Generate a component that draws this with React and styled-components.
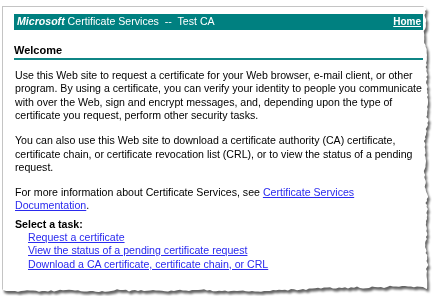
import styled, { createGlobalStyle } from "styled-components";

const GlobalStyle = createGlobalStyle`
  html, body {
    margin: 0;
    padding: 0;
    background: #fff;
  }
  body {
    font-family: "Liberation Sans", Arial, sans-serif;
    color: #000;
  }
`;

// jagged right and bottom edge of the torn sheet
const tornEdge = (() => {
  let seed = 11;
  const rnd = () => {
    seed = (seed * 9301 + 49297) % 233280;
    return seed / 233280;
  };
  const W = 426;
  const H = 285;
  const pts = ["0px 0px", `${W - 5}px 0px`];
  let drift = 0;
  for (let y = 3; y < H; y += 2) {
    drift = Math.max(-2, Math.min(2, drift + (rnd() - 0.5) * 1.6));
    pts.push(`${(W - 3 + drift + rnd() * 1.5).toFixed(1)}px ${y}px`);
  }
  drift = 0;
  for (let x = W - 2; x > 0; x -= 3) {
    drift = Math.max(-2.5, Math.min(2.5, drift + (rnd() - 0.5) * 1.8));
    pts.push(`${x}px ${(H - 3 + drift + rnd() * 1.5).toFixed(1)}px`);
  }
  pts.push(`0px ${H - 2}px`);
  return `polygon(${pts.join(", ")})`;
})();

const Stage = styled.div`
  width: 433px;
  height: 296px;
  overflow: hidden;
  padding: 6px 0 0 2px;
  box-sizing: border-box;
  filter: drop-shadow(2px 3px 1.2px rgba(0, 0, 0, 0.6));
`;

const Sheet = styled.div`
  width: 428px;
  height: 287px;
  box-sizing: border-box;
  background: #fff;
  border-left: 1px solid #c4c4c4;
  border-top: 1px solid #c4c4c4;
  border-top-right-radius: 5px;
  padding: 7px 0 0 11px;
  clip-path: ${tornEdge};
`;

const Content = styled.div`
  width: 409px;
  font-size: 10.6px;
  line-height: 13.4px;
`;

const Banner = styled.div`
  height: 16px;
  background: #008080;
  color: #fff;
  display: flex;
  align-items: center;
  justify-content: space-between;
  padding: 0 2px 0 3px;
`;

const Brand = styled.span`
  font-weight: bold;
  font-style: italic;
`;

const HomeLink = styled.a`
  color: #fff;
  font-weight: bold;
  font-size: 10px;
  text-decoration: underline;
`;

const Heading = styled.div`
  margin-top: 14px;
  font-size: 11px;
  font-weight: bold;
  line-height: 13px;
  padding-bottom: 1px;
  border-bottom: 2px solid #0f8585;
`;

const Paragraph = styled.p`
  margin: 9px 0 0;
  padding-left: 1px;

  & + & {
    margin-top: 11.5px;
  }
`;

const Link = styled.a`
  color: #2a2aee;
  text-decoration: underline;
`;

const TaskTitle = styled.div`
  margin-top: 5.5px;
  padding-left: 1px;
  font-weight: bold;
`;

const TaskList = styled.ul`
  list-style: none;
  margin: -1px 0 0;
  padding: 0 0 0 14px;
  line-height: 13.6px;
`;

const App = () => {
  return (
    <>
      <GlobalStyle />
      <Stage>
        <Sheet>
          <Content>
            <Banner>
              <span>
                <Brand>Microsoft</Brand> Certificate Services&nbsp; --&nbsp; Test CA
              </span>
              <HomeLink>Home</HomeLink>
            </Banner>
            <Heading>Welcome</Heading>
            <Paragraph>
              Use this Web site to request a certificate for your Web browser, e-mail client, or other
              program. By using a certificate, you can verify your identity to people you communicate
              with over the Web, sign and encrypt messages, and, depending upon the type of
              certificate you request, perform other security tasks.
            </Paragraph>
            <Paragraph>
              You can also use this Web site to download a certificate authority (CA) certificate,
              certificate chain, or certificate revocation list (CRL), or to view the status of a pending
              request.
            </Paragraph>
            <Paragraph>
              For more information about Certificate Services, see <Link>Certificate Services</Link>
              <br />
              <Link>Documentation</Link>.
            </Paragraph>
            <TaskTitle>Select a task:</TaskTitle>
            <TaskList>
              <li>
                <Link>Request a certificate</Link>
              </li>
              <li>
                <Link>View the status of a pending certificate request</Link>
              </li>
              <li>
                <Link>Download a CA certificate, certificate chain, or CRL</Link>
              </li>
            </TaskList>
          </Content>
        </Sheet>
      </Stage>
    </>
  );
};

export default App;
